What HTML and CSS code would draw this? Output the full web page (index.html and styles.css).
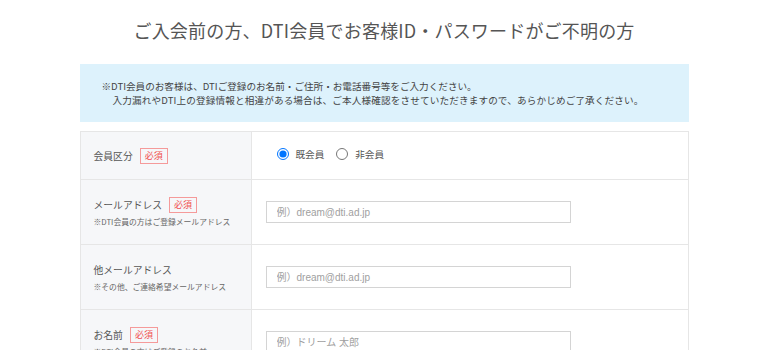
FILE: index.html
```html
<!DOCTYPE html>
<html lang="ja">
<head>
  <meta charset="UTF-8">
  <title>お申し込み</title>
  <link rel="stylesheet" href="styles.css">
</head>
<body>
  <div class="wrap">
    <h2 class="title">ご入会前の方、DTI会員でお客様ID・パスワードがご不明の方</h2>

    <div class="info">
      <p>※DTI会員のお客様は、DTIご登録のお名前・ご住所・お電話番号等をご入力ください。</p>
      <p class="indent">入力漏れやDTI上の登録情報と相違がある場合は、ご本人様確認をさせていただきますので、あらかじめご了承ください。</p>
    </div>

    <table class="form-table">
      <tr class="row-short">
        <th><div class="head"><span class="label">会員区分</span><span class="req">必須</span></div></th>
        <td>
          <div class="radios">
            <label class="radio"><input type="radio" name="member" checked>既会員</label>
            <label class="radio"><input type="radio" name="member">非会員</label>
          </div>
        </td>
      </tr>
      <tr>
        <th>
          <div class="head"><span class="label">メールアドレス</span><span class="req">必須</span></div>
          <div class="note">※DTI会員の方はご登録メールアドレス</div>
        </th>
        <td><input class="text" type="text" placeholder="例）dream@dti.ad.jp"></td>
      </tr>
      <tr>
        <th>
          <div class="head"><span class="label">他メールアドレス</span></div>
          <div class="note">※その他、ご連絡希望メールアドレス</div>
        </th>
        <td><input class="text" type="text" placeholder="例）dream@dti.ad.jp"></td>
      </tr>
      <tr>
        <th>
          <div class="head"><span class="label">お名前</span><span class="req">必須</span></div>
          <div class="note">※DTI会員の方はご登録のお名前</div>
        </th>
        <td><input class="text" type="text" placeholder="例）ドリーム 太郎"></td>
      </tr>
    </table>
  </div>
</body>
</html>
```

FILE: styles.css
```css
body {
  margin: 0;
  background-color: #fff;
  color: #555;
  font-family: "Noto Sans CJK JP", "Noto Sans", sans-serif;
}

.wrap {
  width: 609px;
  margin: 0 auto;
}

.title {
  margin: 0;
  padding-top: 17px;
  height: 47px;
  font-size: 18px;
  font-weight: 400;
  line-height: 26px;
  text-align: center;
  color: #555;
  letter-spacing: 0.01em;
}

.info {
  background-color: #ddf2fc;
  padding: 15px 22px;
  margin-bottom: 9px;
  font-size: 9.6px;
  line-height: 14px;
  color: #444;
}

.info p {
  margin: 0;
}

.info .indent {
  padding-left: 11px;
  letter-spacing: 0.015em;
}

.form-table {
  width: 100%;
  border-collapse: collapse;
  border: 1px solid #e6e6e6;
}

.form-table th,
.form-table td {
  border-top: 1px solid #e6e6e6;
  border-bottom: 1px solid #e6e6e6;
  height: 64px;
  vertical-align: middle;
  text-align: left;
}

.form-table .row-short th,
.form-table .row-short td {
  height: 47px;
}

.form-table th {
  width: 157px;
  padding: 0 0 0 13px;
  background-color: #f6f7f9;
  border-right: 1px solid #e6e6e6;
  font-weight: 400;
}

.form-table td {
  padding: 0 0 0 14px;
}

.head {
  display: flex;
  align-items: center;
  height: 16px;
}

.label {
  font-size: 9.8px;
  color: #555;
}

.req {
  display: inline-block;
  margin-left: 7px;
  width: 26px;
  height: 14px;
  line-height: 14px;
  border: 1px solid #f59a9a;
  color: #f05050;
  font-size: 9px;
  text-align: center;
}

.note {
  margin-top: 3px;
  font-size: 7.8px;
  line-height: 12px;
  color: #666;
}

.radios {
  display: flex;
  align-items: center;
  gap: 12px;
  height: 14px;
  margin: 0 0 4px 11px;
}

.radio {
  display: flex;
  align-items: center;
  font-size: 9.6px;
  color: #555;
}

.radio input {
  margin: 0 7px 0 0;
  width: 12px;
  height: 12px;
}

.text {
  display: block;
  box-sizing: border-box;
  width: 305px;
  height: 22px;
  padding: 0 10px;
  border: 1px solid #d4d4d4;
  font-family: "Liberation Sans", "Noto Sans CJK JP", sans-serif;
  font-size: 10px;
  color: #333;
}

.text::placeholder {
  color: #a0a0a0;
}
```
